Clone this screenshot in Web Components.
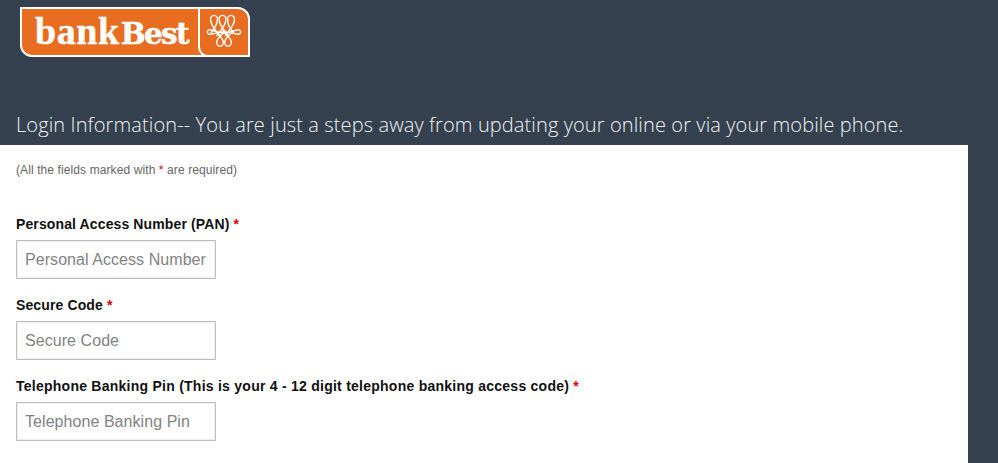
<!DOCTYPE html>
<html><head><meta charset="utf-8"><style>
html,body{margin:0;padding:0;height:100%;overflow:hidden;background:#35414f}
</style></head><body>
<app-page></app-page>
<template id="logo-t"><style>
:host{display:block;width:230px;height:50px;box-sizing:border-box;background:#e96d20;border:2px solid #fff;border-radius:0 12px 0 12px;overflow:hidden}
.r{display:flex;height:100%}
.w{flex:1;display:flex;align-items:baseline;padding:3px 0 0 13px;color:#fff;white-space:nowrap}
.bank{font:700 38px/38px "Liberation Serif",serif;letter-spacing:.6px;margin-right:1px;-webkit-text-stroke:.4px #fff}
.best{font:700 29.5px/38px "DejaVu Serif",serif;letter-spacing:-1.7px;-webkit-text-stroke:.5px #fff}
.m{width:50px;box-sizing:border-box;border-left:2px solid #fff;border-bottom:2px solid #fff;border-bottom-left-radius:10px;display:flex;align-items:center;justify-content:center;margin-bottom:-2px}
svg{width:46px;height:46px;display:block}
</style><div class="r"><div class="w"><span class="bank">bank</span><span class="best">Best</span></div>
<div class="m"><svg viewBox="0 0 46 46" fill="none" stroke="#fff" stroke-width="1.4">
<path d="M19 27C15 22 9.5 16 9.7 11A3.5 3.5 0 1 1 16.3 11C16.5 16 13 20 10 24"/>
<path d="M27.5 27C23.5 22 18 16 18.2 11A3.5 3.5 0 1 1 24.8 11C25 16 19.5 22 15.5 27"/>
<path d="M33 24C30 21 26.5 16 26.7 11A3.5 3.5 0 1 1 33.3 11C33.5 16 28 22 24 27"/>
<path d="M14 21C16 26 22.5 29 22.2 33A3.3 3.3 0 1 1 15.8 33C15.5 29 22 26 24 21"/>
<path d="M22 21C24 26 30.5 29 30.2 33A3.3 3.3 0 1 1 23.8 33C23.5 29 30 26 32 21"/>
<path d="M9 25.2A2.3 2.3 0 1 1 10 21C14 21.5 16 24 23 24S32 21.5 36 21A2.3 2.3 0 1 1 37 25.2C33 25 30 23 23 23S13 25 9 25.2"/>
</svg></div></div></template>
<template id="field-t"><style>
:host{display:block;margin-bottom:16px}
label{display:block;font:700 14px/20px "Liberation Sans",Arial,sans-serif;color:#111;letter-spacing:var(--ls,.12px);margin-bottom:6px}
i{font-style:normal;color:#d00}
input{display:block;box-sizing:border-box;width:200px;height:39px;border:1px solid #bfbfbf;box-shadow:inset 0 0 0 1px #eee;padding:0 8px;margin:0;background:#fff;font:16px "Liberation Sans",Arial,sans-serif;letter-spacing:.06px;outline:none;border-radius:0}
input::placeholder{color:#828282;opacity:1}
</style><label><slot></slot> <i>*</i></label><input></template>
<template id="page-t"><style>
:host{display:block;height:463px;overflow:hidden;font-family:"Liberation Sans",Arial,sans-serif}
header{height:145px;box-sizing:border-box;padding:7px 0 0 20px;display:flex;flex-direction:column;justify-content:space-between}
h1{margin:0 0 0 -4px;font:300 20px/28px "Open Sans",sans-serif;letter-spacing:.11px;color:#f2f2f2;white-space:nowrap;padding-bottom:6px}
main{width:968px;height:318px;background:#fff;box-sizing:border-box;padding:16px 16px 0}
.note{font-size:12px;line-height:18px;color:#666;letter-spacing:.1px;margin:0 0 35px}
.note i{font-style:normal;color:#d00}
.long{--ls:.25px}
</style><header><bank-logo></bank-logo><h1>Login Information-- You are just a steps away from updating your online or via your mobile phone.</h1></header>
<main><p class="note">(All the fields marked with <i>*</i> are required)</p>
<form-field placeholder="Personal Access Number">Personal Access Number (PAN)</form-field>
<form-field placeholder="Secure Code">Secure Code</form-field>
<form-field class="long" placeholder="Telephone Banking Pin">Telephone Banking Pin (This is your 4 - 12 digit telephone banking access code)</form-field>
</main></template>
<script>
function mk(id){return class extends HTMLElement{constructor(){super();this.attachShadow({mode:'open'}).appendChild(document.getElementById(id).content.cloneNode(true));}}}
customElements.define('bank-logo',mk('logo-t'));
customElements.define('form-field',class extends mk('field-t'){connectedCallback(){this.shadowRoot.querySelector('input').placeholder=this.getAttribute('placeholder')||'';}});
customElements.define('app-page',mk('page-t'));
</script></body></html>
